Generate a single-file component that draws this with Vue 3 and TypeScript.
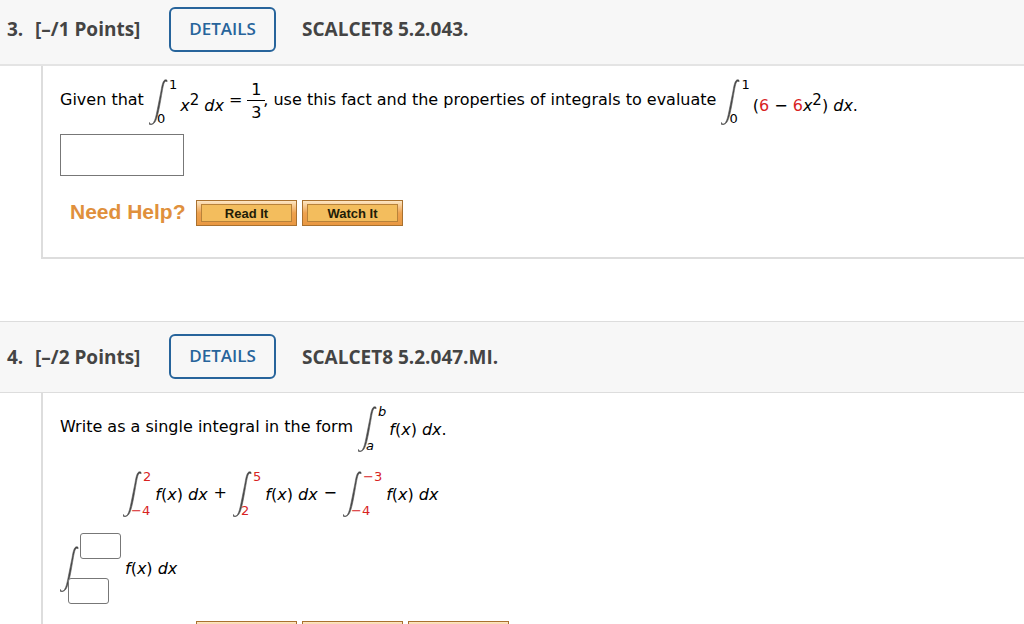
<script setup lang="ts">
interface Piece {
  t: string
  italic?: boolean
  red?: boolean
  sup?: boolean
}
interface Token {
  kind: 'text' | 'integral' | 'expr' | 'fn' | 'frac' | 'op'
  text?: string
  upper?: string
  lower?: string
  red?: boolean
  italic?: boolean
  tight?: boolean
  pieces?: Piece[]
}
interface Question {
  id: number
  points: string
  code: string
  lines: Token[][]
  answer: 'box' | 'integral'
  help: string[]
}

const fx = (end = ''): Token => ({
  kind: 'fn',
  pieces: [{ t: 'f', italic: true }, { t: '(' }, { t: 'x', italic: true }, { t: ') ' }, { t: 'dx', italic: true }, { t: end }],
})

const questions: Question[] = [
  {
    id: 3,
    points: '[–/1 Points]',
    code: 'SCALCET8 5.2.043.',
    lines: [
      [
        { kind: 'text', text: 'Given that' },
        { kind: 'integral', upper: '1', lower: '0' },
        { kind: 'expr', pieces: [{ t: 'x', italic: true }, { t: '2', sup: true }, { t: ' ' }, { t: 'dx', italic: true }] },
        { kind: 'text', text: '=' },
        { kind: 'frac', upper: '1', lower: '3' },
        { kind: 'text', text: ', use this fact and the properties of integrals to evaluate', tight: true },
        { kind: 'integral', upper: '1', lower: '0' },
        {
          kind: 'expr',
          pieces: [
            { t: '(' }, { t: '6', red: true }, { t: ' − ' }, { t: '6', red: true }, { t: 'x', italic: true },
            { t: '2', sup: true }, { t: ') ' }, { t: 'dx', italic: true }, { t: '.' },
          ],
        },
      ],
    ],
    answer: 'box',
    help: ['Read It', 'Watch It'],
  },
  {
    id: 4,
    points: '[–/2 Points]',
    code: 'SCALCET8 5.2.047.MI.',
    lines: [
      [
        { kind: 'text', text: 'Write as a single integral in the form' },
        { kind: 'integral', upper: 'b', lower: 'a', italic: true },
        fx('.'),
      ],
      [
        { kind: 'integral', upper: '2', lower: '−4', red: true },
        fx(),
        { kind: 'op', text: '+' },
        { kind: 'integral', upper: '5', lower: '2', red: true },
        fx(),
        { kind: 'op', text: '−' },
        { kind: 'integral', upper: '−3', lower: '−4', red: true },
        fx(),
      ],
    ],
    answer: 'integral',
    help: ['Read It', 'Watch It', 'Master It'],
  },
]

const curve =
  'M0.5 43.5C1 45.5 3 45.5 4.5 43.5C6 41.5 7 37 8 32L12 12C13 6 14 1 16.5 0.8C18 0.8 18.5 1.6 18 2.8C17 1.8 15.5 2 14.5 6C13.5 10 12.5 17 11 25C9.5 33 8 40 6 43C4 46 0.5 46.5 0 44.5Z'
</script>

<template>
  <main class="page">
    <section v-for="q in questions" :key="q.id" class="question">
      <header class="bar">
        <h2 class="number">{{ q.id }}.</h2>
        <span class="points">{{ q.points }}</span>
        <button type="button" class="details">DETAILS</button>
        <span class="code">{{ q.code }}</span>
      </header>

      <div class="body">
        <div v-for="(line, li) in q.lines" :key="li" class="line" :class="{ display: li > 0 }">
          <template v-for="(tok, ti) in line" :key="ti">
            <span v-if="tok.kind === 'integral'" class="integral">
              <svg class="sign" viewBox="0 0 19 46" aria-hidden="true"><path :d="curve" /></svg>
              <span class="upper" :class="{ red: tok.red, italic: tok.italic }">{{ tok.upper }}</span>
              <span class="lower" :class="{ red: tok.red, italic: tok.italic }">{{ tok.lower }}</span>
            </span>
            <span v-else-if="tok.kind === 'frac'" class="frac">
              <span class="num">{{ tok.upper }}</span>
              <span>{{ tok.lower }}</span>
            </span>
            <span v-else-if="tok.pieces" :class="tok.kind"><span
              v-for="(p, pi) in tok.pieces" :key="pi"
              :class="{ italic: p.italic, red: p.red, sup: p.sup }">{{ p.t }}</span></span>
            <span v-else :class="[tok.kind, { tight: tok.tight }]">{{ tok.text }}</span>
          </template>
        </div>

        <input v-if="q.answer === 'box'" class="answer" type="text" aria-label="Answer" />
        <div v-else class="entry">
          <svg class="sign entry-sign" viewBox="0 0 19 46" aria-hidden="true"><path :d="curve" /></svg>
          <input class="limit top" type="text" aria-label="Upper limit" />
          <input class="limit bottom" type="text" aria-label="Lower limit" />
          <span class="entry-expr"><i>f</i>(<i>x</i>) <i>dx</i></span>
        </div>

        <div class="help">
          <span class="need">Need Help?</span>
          <button v-for="h in q.help" :key="h" type="button" class="help-btn"><span>{{ h }}</span></button>
        </div>
      </div>
    </section>
  </main>
</template>

<style>
body {
  margin: 0;
  background: #fff;
}
</style>

<style scoped>
.page {
  height: 100vh;
  overflow: hidden;
  font-family: "DejaVu Sans", Verdana, sans-serif;
  font-size: 16px;
  line-height: 20px;
  color: #000;
}
.question + .question {
  margin-top: 62px;
}
.bar {
  display: flex;
  align-items: center;
  box-sizing: border-box;
  height: 72px;
  padding: 0 0 1px 7px;
  background: #f7f7f7;
  border-top: 1px solid #ddd;
  border-bottom: 1px solid #ddd;
  font-family: "Open Sans", sans-serif;
  font-size: 19px;
  font-weight: 700;
  color: #444;
  white-space: nowrap;
}
.question:first-child .bar {
  height: 66px;
  border-top: 0;
  border-bottom: 2px solid #e4e4e4;
  padding-bottom: 6px;
}
.number {
  margin: 0;
  width: 28px;
  font-size: 19px;
}
.points {
  width: 134px;
}
.details {
  box-sizing: border-box;
  width: 107px;
  height: 45px;
  margin-right: 26px;
  padding: 0 0 2px;
  background: transparent;
  border: 2px solid #27649b;
  border-radius: 6px;
  font-family: "Open Sans", sans-serif;
  font-size: 17px;
  font-weight: 600;
  color: #27649b;
}
.body {
  margin-left: 41px;
  padding: 13px 0 31px 17px;
  border-left: 2px solid #ddd;
  border-bottom: 2px solid #ddd;
}
.line {
  display: flex;
  align-items: flex-start;
  height: 46px;
  gap: 5px;
  white-space: nowrap;
}
.display {
  margin: 19px 0 0 63px;
  gap: 6px;
}
.text {
  margin-top: 11px;
}
.tight {
  margin-left: -7px;
}
.expr,
.fn,
.op {
  margin-top: 17px;
  white-space: pre;
}
.expr,
.fn {
  margin-left: -2px;
}
.fn {
  margin-top: 14px;
}
.op {
  margin-top: 12px;
}
.italic,
i {
  font-style: italic;
}
.red {
  color: #d8231f;
}
.sup {
  font-size: 15px;
  line-height: 0;
  vertical-align: 6px;
}
.integral {
  display: grid;
  grid-template-columns: 8px 12px auto;
  grid-template-rows: 12px 34px;
  font-size: 13px;
  line-height: 12px;
}
.sign {
  width: 19px;
  height: 46px;
  grid-column: 1 / 3;
  grid-row: 1 / 3;
  fill: #444;
  stroke: #555;
  stroke-width: 0.6;
}
.upper {
  grid-column: 3;
  grid-row: 1;
}
.lower {
  grid-column: 2 / 4;
  grid-row: 2;
  align-self: end;
}
.frac {
  display: flex;
  flex-direction: column;
  padding-top: 1px;
  text-align: center;
  width: 18px;
}
.num {
  border-bottom: 1px solid #000;
}
.frac span + span {
  padding-top: 2px;
}
.answer {
  display: block;
  box-sizing: border-box;
  width: 124px;
  height: 42px;
  margin-top: 9px;
  border: 1px solid #777;
  background: #fff;
  font-size: 16px;
}
.entry {
  display: grid;
  grid-template-columns: 8px 12px 29px 12px auto;
  grid-template-rows: 26px 19px 26px;
  margin-top: 16px;
}
.entry-sign {
  grid-column: 1 / 3;
  grid-row: 1 / 4;
  margin-top: 13px;
}
.limit {
  box-sizing: border-box;
  width: 41px;
  height: 26px;
  padding: 1px 3px;
  border: 1px solid #777;
  border-radius: 3px;
  background: #fff;
}
.top {
  grid-column: 3 / 5;
  grid-row: 1;
}
.bottom {
  grid-column: 2 / 4;
  grid-row: 3;
}
.entry-expr {
  grid-column: 5;
  grid-row: 2;
  padding-left: 4px;
}
.help {
  display: flex;
  align-items: center;
  gap: 5px;
  margin-top: 24px;
  padding-left: 10px;
}
.entry + .help {
  margin-top: 17px;
}
.need {
  width: 121px;
  padding-bottom: 2px;
  font-family: "Liberation Sans", Arial, sans-serif;
  font-size: 21px;
  font-weight: 700;
  color: #e0903c;
  white-space: nowrap;
}
.help-btn {
  box-sizing: border-box;
  display: flex;
  width: 101px;
  height: 26px;
  padding: 3px 4px;
  border: 1px solid #a9712f;
  background: linear-gradient(#fde6c3, #eea24f 50%, #e99842);
}
.help-btn span {
  flex: 1;
  border: 1px solid #b8823a;
  background: #f3bd5d;
  font-family: "Liberation Sans", Arial, sans-serif;
  font-size: 13px;
  font-weight: 700;
  line-height: 17px;
  color: #221c08;
}
</style>
